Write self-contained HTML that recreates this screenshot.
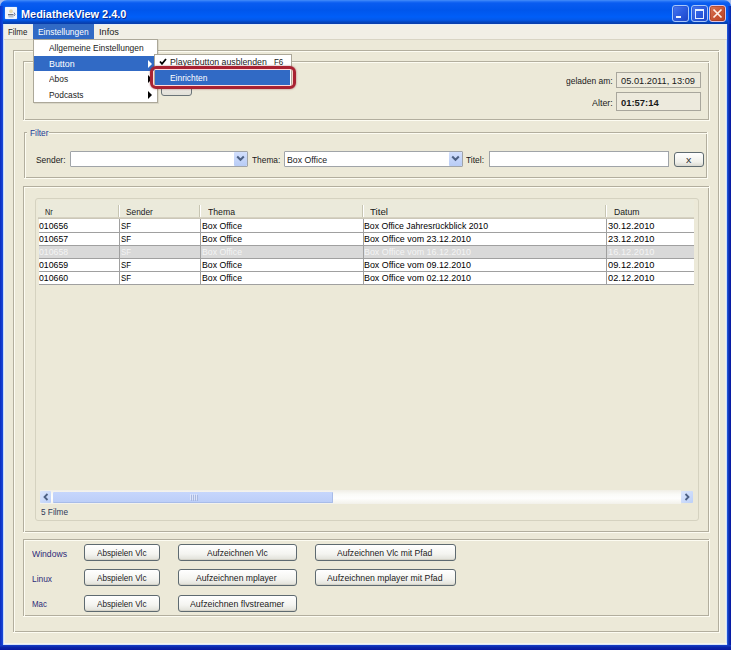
<!DOCTYPE html>
<html><head><meta charset="utf-8"><style>
html,body{margin:0;padding:0;width:731px;height:650px;overflow:hidden;position:relative;background:#ECE9D8}
.t{position:absolute;white-space:nowrap;font-family:"Liberation Sans", sans-serif;line-height:1;transform-origin:0 0;}
</style></head><body>
<div style="position:absolute;left:0px;top:0px;width:731px;height:650px;background:#0845D8;"></div>
<div style="position:absolute;left:0px;top:0px;width:8px;height:8px;background:#A4BCF0;"></div>
<div style="position:absolute;left:723px;top:0px;width:8px;height:8px;background:#A4BCF0;"></div>
<div style="position:absolute;left:0px;top:0px;width:731px;height:24px;background:linear-gradient(#4A90F8 0px,#2A78F8 1px,#0A5CF0 3px,#0056EC 10px,#005EF8 17px,#0458E8 20px,#0346C0 22px,#0A3CA8 24px);border-radius:7px 7px 0 0;"></div>
<div style="position:absolute;left:0px;top:6px;width:3px;height:18px;background:linear-gradient(90deg,#0A34C8,#0C48E0);"></div>
<div style="position:absolute;left:728px;top:6px;width:3px;height:18px;background:linear-gradient(90deg,#0C48E0,#0828A8);"></div>
<div style="position:absolute;left:4px;top:24px;width:723px;height:621px;background:#ECE9D8;"></div>
<div style="position:absolute;left:0px;top:645px;width:731px;height:5px;background:#0A3FBF;"></div>
<div style="position:absolute;left:0px;top:24px;width:4px;height:621px;background:linear-gradient(90deg,#0A2CC0,#1A48D8 70%,#2858E0 75%);"></div>
<div style="position:absolute;left:3px;top:24px;width:1px;height:621px;background:#C4D8F8;"></div>
<div style="position:absolute;left:4px;top:24px;width:1px;height:621px;background:#EEF0EC;"></div>
<div style="position:absolute;left:727px;top:24px;width:4px;height:621px;background:linear-gradient(90deg,#2860E0,#0A2CB0 50%,#0818A0);"></div>
<div style="position:absolute;left:726px;top:24px;width:1px;height:621px;background:#D0E0F8;"></div>
<div style="position:absolute;left:725px;top:24px;width:1px;height:621px;background:#EEEEE6;"></div>
<div style="position:absolute;left:0px;top:645px;width:731px;height:5px;background:linear-gradient(#1840C8,#0A24A8 50%,#0818A0);"></div>
<div style="position:absolute;left:4px;top:644px;width:723px;height:1px;background:#D8E4F8;"></div>
<div style="position:absolute;left:4px;top:643px;width:723px;height:1px;background:#F4F4EE;"></div>
<div style="position:absolute;left:5px;top:7px;width:12px;height:12px;background:#F2F6FC;border-radius:1px;box-shadow:0 0 1px #C8DCF8"></div>
<svg style="position:absolute;left:5px;top:7px" width="12" height="12"><ellipse cx="6" cy="4.2" rx="1.9" ry="2" fill="#E2D6A8" opacity=".9"/><rect x="3" y="7" width="5.5" height="1.4" fill="#707480"/><path d="M9 5.5 Q11 7.5 9 9" stroke="#6878A0" stroke-width="1" fill="none"/><rect x="3.5" y="9.2" width="5" height="1.2" fill="#A8B8C8"/></svg>
<div class="t" style="left:21.00px;top:9.31px;font-size:10.5px;font-weight:bold;color:#FFF;transform:scaleX(1.0399);text-shadow:1px 1px 0 #0A2A8A;-webkit-text-stroke:0;">MediathekView 2.4.0</div>
<div style="position:absolute;left:672px;top:5px;width:15px;height:15px;border:1px solid #A8C8FA;border-radius:3px;background:linear-gradient(135deg,#4A78F0,#2C5CE0 50%,#1C44C8);box-shadow:inset 0 0 0 1px rgba(40,80,200,.5)"><div style="position:absolute;left:3px;top:10px;width:5px;height:2px;background:#EEF4FF"></div></div>
<div style="position:absolute;left:691px;top:5px;width:15px;height:15px;border:1px solid #A8C8FA;border-radius:3px;background:linear-gradient(135deg,#4A78F0,#2C5CE0 50%,#1C44C8);box-shadow:inset 0 0 0 1px rgba(40,80,200,.5)"><div style="position:absolute;left:3px;top:3px;width:7px;height:7px;border:1px solid #E4EEFF;border-top-width:2px"></div></div>
<div style="position:absolute;left:709px;top:5px;width:15px;height:15px;border:1px solid #E0C4E0;border-radius:3px;background:linear-gradient(135deg,#D87858,#C85434 55%,#B84424);box-shadow:inset 0 0 0 1px rgba(150,50,30,.5)"><svg width="15" height="15" style="position:absolute;left:0;top:0"><path d="M3.5 3.5 L11.5 11.5 M11.5 3.5 L3.5 11.5" stroke="#FFF0E8" stroke-width="1.7"/></svg></div>
<div style="position:absolute;left:4px;top:24px;width:723px;height:15px;background:#F1EFE6;"></div>
<div style="position:absolute;left:4px;top:24px;width:723px;height:1px;background:#E4EEF8;"></div>
<div style="position:absolute;left:4px;top:39px;width:723px;height:1px;background:#D8D4C4;"></div>
<div style="position:absolute;left:33px;top:24px;width:61px;height:16px;background:#316AC5;"></div>
<div class="t" style="left:7.80px;top:28.48px;font-size:9px;font-weight:normal;color:#1A1A1A;transform:scaleX(0.8773);">Filme</div>
<div class="t" style="left:37.50px;top:28.48px;font-size:9px;font-weight:normal;color:#FFF;transform:scaleX(0.9362);">Einstellungen</div>
<div class="t" style="left:99.00px;top:28.48px;font-size:9px;font-weight:normal;color:#1A1A1A;transform:scaleX(1.0197);">Infos</div>
<div style="position:absolute;left:13px;top:50px;width:704px;height:580px;border:1px solid #B2AE9E;"></div>
<div style="position:absolute;left:14px;top:51px;width:704px;height:580px;border:1px solid #FDFCF2;border-right:none;border-bottom:none"></div>
<div style="position:absolute;left:13px;top:632px;width:707px;height:1px;background:#FDFCF2"></div>
<div style="position:absolute;left:719px;top:50px;width:1px;height:583px;background:#FDFCF2"></div>
<div style="position:absolute;left:23px;top:61px;width:684px;height:57px;border:1px solid #B2AE9E;"></div>
<div style="position:absolute;left:24px;top:62px;width:684px;height:57px;border:1px solid #FDFCF2;border-right:none;border-bottom:none"></div>
<div style="position:absolute;left:23px;top:120px;width:687px;height:1px;background:#FDFCF2"></div>
<div style="position:absolute;left:709px;top:61px;width:1px;height:60px;background:#FDFCF2"></div>
<div style="position:absolute;left:24px;top:132px;width:681px;height:44px;border:1px solid #B2AE9E;"></div>
<div style="position:absolute;left:25px;top:133px;width:681px;height:44px;border:1px solid #FDFCF2;border-right:none;border-bottom:none"></div>
<div style="position:absolute;left:24px;top:178px;width:684px;height:1px;background:#FDFCF2"></div>
<div style="position:absolute;left:707px;top:132px;width:1px;height:47px;background:#FDFCF2"></div>
<div style="position:absolute;left:27px;top:126px;width:22px;height:10px;background:#ECE9D8;"></div>
<div class="t" style="left:29.50px;top:128.68px;font-size:9px;font-weight:normal;color:#203C98;transform:scaleX(0.9250);">Filter</div>
<div style="position:absolute;left:23px;top:186px;width:684px;height:344px;border:1px solid #B2AE9E;"></div>
<div style="position:absolute;left:24px;top:187px;width:684px;height:344px;border:1px solid #FDFCF2;border-right:none;border-bottom:none"></div>
<div style="position:absolute;left:23px;top:532px;width:687px;height:1px;background:#FDFCF2"></div>
<div style="position:absolute;left:709px;top:186px;width:1px;height:347px;background:#FDFCF2"></div>
<div style="position:absolute;left:23px;top:539px;width:684px;height:75px;border:1px solid #B2AE9E;"></div>
<div style="position:absolute;left:24px;top:540px;width:684px;height:75px;border:1px solid #FDFCF2;border-right:none;border-bottom:none"></div>
<div style="position:absolute;left:23px;top:616px;width:687px;height:1px;background:#FDFCF2"></div>
<div style="position:absolute;left:709px;top:539px;width:1px;height:78px;background:#FDFCF2"></div>
<div style="position:absolute;left:161px;top:78px;width:29px;height:16px;border:1px solid #6A7478;border-radius:3px;background:linear-gradient(#F8F8F4,#E2E0D8);"></div>
<div class="t" style="left:565.80px;top:76.88px;font-size:9px;font-weight:normal;color:#1A1A1A;transform:scaleX(0.9405);">geladen am:</div>
<div style="position:absolute;left:616px;top:72px;width:83px;height:14px;border:1px solid #A8A69C;background:#EDEADD"></div>
<div class="t" style="left:621.00px;top:76.88px;font-size:9px;font-weight:normal;color:#1A1A1A;transform:scaleX(1.0291);">05.01.2011, 13:09</div>
<div class="t" style="left:591.60px;top:98.88px;font-size:9px;font-weight:normal;color:#1A1A1A;transform:scaleX(0.9897);">Alter:</div>
<div style="position:absolute;left:616px;top:92px;width:83px;height:17px;border:1px solid #A8A69C;background:#EDEADD"></div>
<div class="t" style="left:621.00px;top:98.37px;font-size:9.6px;font-weight:bold;color:#1A1A1A;transform:scaleX(0.9816);-webkit-text-stroke:0;">01:57:14</div>
<div class="t" style="left:35.50px;top:156.38px;font-size:9px;font-weight:normal;color:#1A1A1A;transform:scaleX(0.9356);">Sender:</div>
<div style="position:absolute;left:70px;top:151px;width:176px;height:14px;border:1px solid #A0A4A8;background:#fff;border-radius:1px"></div>
<div style="position:absolute;left:234px;top:152px;width:13px;height:14px;background:linear-gradient(#D2DFFD,#B8CCF6);border-radius:1px"></div>
<svg style="position:absolute;left:236px;top:155px" width="9" height="7"><path d="M1.2 1.5 L4.5 4.8 L7.8 1.5" stroke="#4D6185" stroke-width="2" fill="none"/></svg>
<div class="t" style="left:251.70px;top:155.88px;font-size:9px;font-weight:normal;color:#1A1A1A;transform:scaleX(0.9274);">Thema:</div>
<div style="position:absolute;left:284px;top:151px;width:177px;height:14px;border:1px solid #A0A4A8;background:#fff;border-radius:1px"></div>
<div style="position:absolute;left:449px;top:152px;width:13px;height:14px;background:linear-gradient(#D2DFFD,#B8CCF6);border-radius:1px"></div>
<svg style="position:absolute;left:451px;top:155px" width="9" height="7"><path d="M1.2 1.5 L4.5 4.8 L7.8 1.5" stroke="#4D6185" stroke-width="2" fill="none"/></svg>
<div class="t" style="left:287.30px;top:155.88px;font-size:9px;font-weight:normal;color:#1A1A1A;transform:scaleX(0.9720);">Box Office</div>
<div class="t" style="left:466.00px;top:155.88px;font-size:9px;font-weight:normal;color:#1A1A1A;transform:scaleX(0.9389);">Titel:</div>
<div style="position:absolute;left:489px;top:151px;width:178px;height:14px;border:1px solid #A0A4A8;background:#fff;"></div>
<div style="position:absolute;left:674px;top:152px;width:28px;height:13px;border:1px solid #5F6B70;border-radius:3px;background:linear-gradient(#FFFFFF,#F0F0EA 70%,#D8D8D0);"></div>
<div class="t" style="left:685.90px;top:155.58px;font-size:9px;font-weight:normal;color:#303030;transform:scaleX(1.2000);">x</div>
<div style="position:absolute;left:35px;top:198px;width:662px;height:321px;border:1px solid #D5D2C0;border-radius:3px;"></div>
<div style="position:absolute;left:38px;top:200px;width:656px;height:17px;background:#EBEADB;"></div>
<div style="position:absolute;left:38px;top:217px;width:656px;height:1px;background:#D6D2C2;"></div>
<div style="position:absolute;left:38px;top:218px;width:656px;height:1px;background:#CBC7B8;"></div>
<div style="position:absolute;left:118px;top:205px;width:1px;height:12px;background:#C7C5B2;"></div>
<div style="position:absolute;left:119px;top:205px;width:1px;height:12px;background:#FFFFFF;"></div>
<div style="position:absolute;left:199px;top:205px;width:1px;height:12px;background:#C7C5B2;"></div>
<div style="position:absolute;left:200px;top:205px;width:1px;height:12px;background:#FFFFFF;"></div>
<div style="position:absolute;left:362px;top:205px;width:1px;height:12px;background:#C7C5B2;"></div>
<div style="position:absolute;left:363px;top:205px;width:1px;height:12px;background:#FFFFFF;"></div>
<div style="position:absolute;left:605px;top:205px;width:1px;height:12px;background:#C7C5B2;"></div>
<div style="position:absolute;left:606px;top:205px;width:1px;height:12px;background:#FFFFFF;"></div>
<div class="t" style="left:44.90px;top:208.38px;font-size:9px;font-weight:normal;color:#1A1A1A;transform:scaleX(0.8105);">Nr</div>
<div class="t" style="left:126.00px;top:208.38px;font-size:9px;font-weight:normal;color:#1A1A1A;transform:scaleX(0.9266);">Sender</div>
<div class="t" style="left:207.80px;top:208.38px;font-size:9px;font-weight:normal;color:#1A1A1A;transform:scaleX(0.9637);">Thema</div>
<div class="t" style="left:370.00px;top:208.38px;font-size:9px;font-weight:normal;color:#1A1A1A;transform:scaleX(1.0797);">Titel</div>
<div class="t" style="left:613.50px;top:208.38px;font-size:9px;font-weight:normal;color:#1A1A1A;transform:scaleX(0.9617);">Datum</div>
<div style="position:absolute;left:39px;top:219px;width:655px;height:66px;background:#FFFFFF;"></div>
<div style="position:absolute;left:39px;top:245px;width:655px;height:13px;background:#D9D9D9;"></div>
<div style="position:absolute;left:39px;top:232px;width:655px;height:1px;background:#A0A0A0;"></div>
<div style="position:absolute;left:39px;top:245px;width:655px;height:1px;background:#A0A0A0;"></div>
<div style="position:absolute;left:39px;top:258px;width:655px;height:1px;background:#A0A0A0;"></div>
<div style="position:absolute;left:39px;top:271px;width:655px;height:1px;background:#A0A0A0;"></div>
<div style="position:absolute;left:39px;top:284px;width:655px;height:1px;background:#A0A0A0;"></div>
<div style="position:absolute;left:119px;top:219px;width:1px;height:66px;background:#A0A0A0;"></div>
<div style="position:absolute;left:200px;top:219px;width:1px;height:66px;background:#A0A0A0;"></div>
<div style="position:absolute;left:363px;top:219px;width:1px;height:66px;background:#A0A0A0;"></div>
<div style="position:absolute;left:606px;top:219px;width:1px;height:66px;background:#A0A0A0;"></div>
<div class="t" style="left:39.30px;top:222.38px;font-size:9px;font-weight:normal;color:#000;transform:scaleX(0.9685);">010656</div>
<div class="t" style="left:120.50px;top:222.38px;font-size:9px;font-weight:normal;color:#000;transform:scaleX(0.8684);">SF</div>
<div class="t" style="left:201.50px;top:222.38px;font-size:9px;font-weight:normal;color:#000;transform:scaleX(0.9671);">Box Office</div>
<div class="t" style="left:363.80px;top:222.38px;font-size:9px;font-weight:normal;color:#000;transform:scaleX(0.9657);">Box Office Jahresrückblick 2010</div>
<div class="t" style="left:607.50px;top:222.38px;font-size:9px;font-weight:normal;color:#000;transform:scaleX(1.0323);">30.12.2010</div>
<div class="t" style="left:39.30px;top:235.38px;font-size:9px;font-weight:normal;color:#000;transform:scaleX(0.9685);">010657</div>
<div class="t" style="left:120.50px;top:235.38px;font-size:9px;font-weight:normal;color:#000;transform:scaleX(0.8684);">SF</div>
<div class="t" style="left:201.50px;top:235.38px;font-size:9px;font-weight:normal;color:#000;transform:scaleX(0.9671);">Box Office</div>
<div class="t" style="left:363.80px;top:235.38px;font-size:9px;font-weight:normal;color:#000;transform:scaleX(0.9870);">Box Office vom 23.12.2010</div>
<div class="t" style="left:607.50px;top:235.38px;font-size:9px;font-weight:normal;color:#000;transform:scaleX(1.0323);">23.12.2010</div>
<div class="t" style="left:39.30px;top:248.38px;font-size:9px;font-weight:normal;color:#F4F4F4;transform:scaleX(0.9685);">010658</div>
<div class="t" style="left:120.50px;top:248.38px;font-size:9px;font-weight:normal;color:#F4F4F4;transform:scaleX(0.8684);">SF</div>
<div class="t" style="left:201.50px;top:248.38px;font-size:9px;font-weight:normal;color:#F4F4F4;transform:scaleX(0.9671);">Box Office</div>
<div class="t" style="left:363.80px;top:248.38px;font-size:9px;font-weight:normal;color:#F4F4F4;transform:scaleX(0.9870);">Box Office vom 16.12.2010</div>
<div class="t" style="left:607.50px;top:248.38px;font-size:9px;font-weight:normal;color:#F4F4F4;transform:scaleX(1.0323);">16.12.2010</div>
<div class="t" style="left:39.30px;top:261.38px;font-size:9px;font-weight:normal;color:#000;transform:scaleX(0.9685);">010659</div>
<div class="t" style="left:120.50px;top:261.38px;font-size:9px;font-weight:normal;color:#000;transform:scaleX(0.8684);">SF</div>
<div class="t" style="left:201.50px;top:261.38px;font-size:9px;font-weight:normal;color:#000;transform:scaleX(0.9671);">Box Office</div>
<div class="t" style="left:363.80px;top:261.38px;font-size:9px;font-weight:normal;color:#000;transform:scaleX(0.9870);">Box Office vom 09.12.2010</div>
<div class="t" style="left:607.50px;top:261.38px;font-size:9px;font-weight:normal;color:#000;transform:scaleX(1.0323);">09.12.2010</div>
<div class="t" style="left:39.30px;top:274.38px;font-size:9px;font-weight:normal;color:#000;transform:scaleX(0.9685);">010660</div>
<div class="t" style="left:120.50px;top:274.38px;font-size:9px;font-weight:normal;color:#000;transform:scaleX(0.8684);">SF</div>
<div class="t" style="left:201.50px;top:274.38px;font-size:9px;font-weight:normal;color:#000;transform:scaleX(0.9671);">Box Office</div>
<div class="t" style="left:363.80px;top:274.38px;font-size:9px;font-weight:normal;color:#000;transform:scaleX(0.9870);">Box Office vom 02.12.2010</div>
<div class="t" style="left:607.50px;top:274.38px;font-size:9px;font-weight:normal;color:#000;transform:scaleX(1.0323);">02.12.2010</div>
<div style="position:absolute;left:40px;top:490px;width:641px;height:14px;background:linear-gradient(#F0EEE6,#FAFAF7 30%,#FEFEFD 60%,#F2F1EA);"></div>
<div style="position:absolute;left:40px;top:491px;width:11px;height:12px;background:linear-gradient(135deg,#DCE6FC,#BCD0F8);border-radius:1px;"></div>
<svg style="position:absolute;left:43px;top:493px" width="6" height="8"><path d="M4.5 1 L1.5 4 L4.5 7" stroke="#4D6185" stroke-width="1.8" fill="none"/></svg>
<div style="position:absolute;left:53px;top:492px;width:279px;height:10px;background:linear-gradient(#C6D6FC,#BCCEF8);border:1px solid #A8BCE8;border-width:0 1px 1px 0;border-radius:1px"></div>
<svg style="position:absolute;left:190px;top:494px" width="9" height="7"><path d="M0.5 0 V6 M2.5 0 V6 M4.5 0 V6 M6.5 0 V6" stroke="#DCE4FA" stroke-width="1"/><path d="M1.5 1 V7 M3.5 1 V7 M5.5 1 V7 M7.5 1 V7" stroke="#A8B8E0" stroke-width="1"/></svg>
<div style="position:absolute;left:681px;top:491px;width:12px;height:12px;background:linear-gradient(135deg,#DCE6FC,#BCD0F8);border-radius:1px;"></div>
<svg style="position:absolute;left:684px;top:493px" width="6" height="8"><path d="M1.5 1 L4.5 4 L1.5 7" stroke="#4D6185" stroke-width="1.8" fill="none"/></svg>
<div class="t" style="left:40.80px;top:507.78px;font-size:9px;font-weight:normal;color:#2E3A58;transform:scaleX(0.9148);">5 Filme</div>
<div class="t" style="left:32.00px;top:550.38px;font-size:9px;font-weight:normal;color:#2C2C78;transform:scaleX(0.9585);">Windows</div>
<div class="t" style="left:32.00px;top:575.38px;font-size:9px;font-weight:normal;color:#2C2C78;transform:scaleX(0.9296);">Linux</div>
<div class="t" style="left:32.00px;top:600.38px;font-size:9px;font-weight:normal;color:#2C2C78;transform:scaleX(0.8815);">Mac</div>
<div style="position:absolute;left:84px;top:544px;width:74px;height:15px;border:1px solid #5E6A70;border-radius:3px;background:linear-gradient(#FFFFFF,#F4F4F0 60%,#E0E0D8);box-shadow:inset 0 -1px 0 #D4D2C8;"></div>
<div class="t" style="left:96.50px;top:548.98px;font-size:9px;font-weight:normal;color:#1A1A1A;transform:scaleX(0.9075);">Abspielen Vlc</div>
<div style="position:absolute;left:84px;top:569px;width:74px;height:15px;border:1px solid #5E6A70;border-radius:3px;background:linear-gradient(#FFFFFF,#F4F4F0 60%,#E0E0D8);box-shadow:inset 0 -1px 0 #D4D2C8;"></div>
<div class="t" style="left:96.50px;top:573.98px;font-size:9px;font-weight:normal;color:#1A1A1A;transform:scaleX(0.9075);">Abspielen Vlc</div>
<div style="position:absolute;left:84px;top:595px;width:74px;height:15px;border:1px solid #5E6A70;border-radius:3px;background:linear-gradient(#FFFFFF,#F4F4F0 60%,#E0E0D8);box-shadow:inset 0 -1px 0 #D4D2C8;"></div>
<div class="t" style="left:96.50px;top:599.98px;font-size:9px;font-weight:normal;color:#1A1A1A;transform:scaleX(0.9075);">Abspielen Vlc</div>
<div style="position:absolute;left:178px;top:544px;width:117px;height:15px;border:1px solid #5E6A70;border-radius:3px;background:linear-gradient(#FFFFFF,#F4F4F0 60%,#E0E0D8);box-shadow:inset 0 -1px 0 #D4D2C8;"></div>
<div class="t" style="left:207.00px;top:548.98px;font-size:9px;font-weight:normal;color:#1A1A1A;transform:scaleX(0.9404);">Aufzeichnen Vlc</div>
<div style="position:absolute;left:178px;top:569px;width:117px;height:15px;border:1px solid #5E6A70;border-radius:3px;background:linear-gradient(#FFFFFF,#F4F4F0 60%,#E0E0D8);box-shadow:inset 0 -1px 0 #D4D2C8;"></div>
<div class="t" style="left:196.20px;top:573.98px;font-size:9px;font-weight:normal;color:#1A1A1A;transform:scaleX(0.9578);">Aufzeichnen mplayer</div>
<div style="position:absolute;left:178px;top:595px;width:117px;height:15px;border:1px solid #5E6A70;border-radius:3px;background:linear-gradient(#FFFFFF,#F4F4F0 60%,#E0E0D8);box-shadow:inset 0 -1px 0 #D4D2C8;"></div>
<div class="t" style="left:189.70px;top:599.98px;font-size:9px;font-weight:normal;color:#1A1A1A;transform:scaleX(0.9767);">Aufzeichnen flvstreamer</div>
<div style="position:absolute;left:315px;top:544px;width:139px;height:15px;border:1px solid #5E6A70;border-radius:3px;background:linear-gradient(#FFFFFF,#F4F4F0 60%,#E0E0D8);box-shadow:inset 0 -1px 0 #D4D2C8;"></div>
<div class="t" style="left:337.40px;top:548.98px;font-size:9px;font-weight:normal;color:#1A1A1A;transform:scaleX(0.9514);">Aufzeichnen Vlc mit Pfad</div>
<div style="position:absolute;left:315px;top:569px;width:139px;height:15px;border:1px solid #5E6A70;border-radius:3px;background:linear-gradient(#FFFFFF,#F4F4F0 60%,#E0E0D8);box-shadow:inset 0 -1px 0 #D4D2C8;"></div>
<div class="t" style="left:326.90px;top:573.98px;font-size:9px;font-weight:normal;color:#1A1A1A;transform:scaleX(0.9660);">Aufzeichnen mplayer mit Pfad</div>
<div style="position:absolute;left:33px;top:39px;width:123px;height:62px;border:1px solid #ACA899;background:#fff;box-shadow:1px 1px 0 rgba(0,0,0,.08)"></div>
<div style="position:absolute;left:34px;top:56px;width:122px;height:15px;background:#316AC5;"></div>
<div class="t" style="left:49.30px;top:44.28px;font-size:9px;font-weight:normal;color:#1A1A1A;transform:scaleX(0.9369);">Allgemeine Einstellungen</div>
<div class="t" style="left:49.30px;top:60.08px;font-size:9px;font-weight:normal;color:#FFF;transform:scaleX(0.9873);">Button</div>
<div class="t" style="left:49.30px;top:75.18px;font-size:9px;font-weight:normal;color:#1A1A1A;transform:scaleX(0.9310);">Abos</div>
<div class="t" style="left:49.30px;top:90.68px;font-size:9px;font-weight:normal;color:#1A1A1A;transform:scaleX(0.9316);">Podcasts</div>
<svg style="position:absolute;left:148px;top:59.5px" width="5" height="8"><path d="M0 0 L4 4 L0 8Z" fill="#fff"/></svg>
<svg style="position:absolute;left:148px;top:75px" width="5" height="8"><path d="M0 0 L4 4 L0 8Z" fill="#000"/></svg>
<svg style="position:absolute;left:148px;top:90.5px" width="5" height="8"><path d="M0 0 L4 4 L0 8Z" fill="#000"/></svg>
<div style="position:absolute;left:154px;top:54px;width:136px;height:32px;border:1px solid #ACA899;background:#fff;"></div>
<div style="position:absolute;left:155px;top:70px;width:135px;height:15px;background:#316AC5;"></div>
<svg style="position:absolute;left:159px;top:58px" width="8" height="7"><path d="M1 3.5 L3 5.8 L7 1" stroke="#000" stroke-width="1.8" fill="none"/></svg>
<div class="t" style="left:169.70px;top:57.78px;font-size:9px;font-weight:normal;color:#1A1A1A;transform:scaleX(0.9721);">Playerbutton ausblenden</div>
<div class="t" style="left:273.60px;top:57.78px;font-size:9px;font-weight:normal;color:#1A1A1A;transform:scaleX(0.8844);">F6</div>
<div class="t" style="left:169.50px;top:73.68px;font-size:9px;font-weight:normal;color:#FFF;transform:scaleX(0.9343);">Einrichten</div>
<div style="position:absolute;left:150px;top:66px;width:140px;height:17px;border:3px solid #A82232;border-radius:6px;box-shadow:inset 0 0 0 1px rgba(255,190,190,.55), 0 0 2px rgba(120,20,30,.6)"></div>
</body></html>
